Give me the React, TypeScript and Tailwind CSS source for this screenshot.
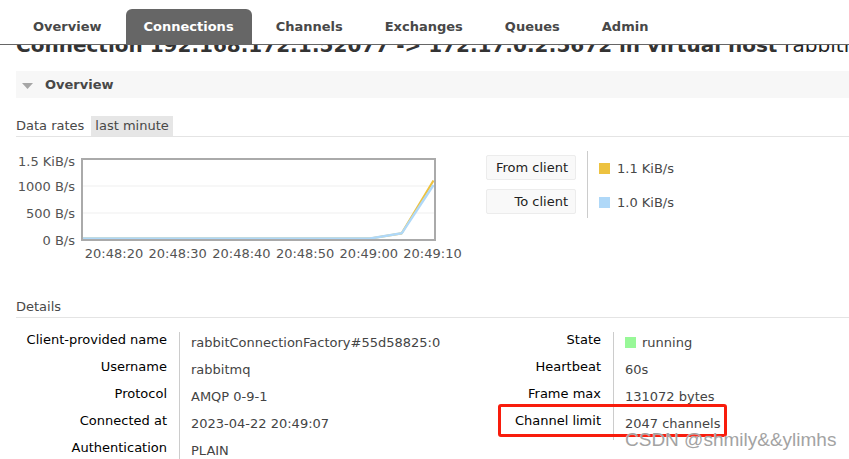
import React from "react";

const tabs = ["Overview", "Connections", "Channels", "Exchanges", "Queues", "Admin"];

const leftRows: [string, string][] = [
  ["Client-provided name", "rabbitConnectionFactory#55d58825:0"],
  ["Username", "rabbitmq"],
  ["Protocol", "AMQP 0-9-1"],
  ["Connected at", "2023-04-22 20:49:07"],
  ["Authentication", "PLAIN"],
];

const rightRows: [string, string][] = [
  ["State", "running"],
  ["Heartbeat", "60s"],
  ["Frame max", "131072 bytes"],
  ["Channel limit", "2047 channels"],
];

function Chart() {
  const xs = [114, 177.7, 241.4, 305.1, 368.8, 432.5];
  const xl = ["20:48:20", "20:48:30", "20:48:40", "20:48:50", "20:49:00", "20:49:10"];
  return (
    <svg width={454} height={130} viewBox="16 140 454 130" className="shrink-0">
      <g fontFamily="'DejaVu Sans', sans-serif" fontSize="13" fill="#545454">
        <text x="75" y="166" textAnchor="end">1.5 KiB/s</text>
        <text x="75" y="191" textAnchor="end">1000 B/s</text>
        <text x="75" y="218" textAnchor="end">500 B/s</text>
        <text x="75" y="245" textAnchor="end">0 B/s</text>
        {xs.map((x, i) => (
          <text key={i} x={x} y="257.5" textAnchor="middle">{xl[i]}</text>
        ))}
      </g>
      <line x1="83" y1="186" x2="434" y2="186" stroke="#efefef" strokeWidth="1" />
      <line x1="83" y1="213" x2="434" y2="213" stroke="#efefef" strokeWidth="1" />
      <polyline
        points="83,238.5 370,238.5 401.7,233.3 433.5,180.5"
        fill="none"
        stroke="#edc240"
        strokeWidth="2.2"
        strokeLinejoin="round"
      />
      <polyline
        points="83,238.5 370,238.5 401.7,233.3 433.5,185"
        fill="none"
        stroke="#afd8f8"
        strokeWidth="2.4"
        strokeLinejoin="round"
      />
      <rect x="82" y="159" width="353" height="81" fill="none" stroke="#aaaaaa" strokeWidth="2" />
    </svg>
  );
}

export default function App() {
  return (
    <div className="relative w-[849px] h-[459px] overflow-hidden bg-white font-['DejaVu_Sans',sans-serif] text-[13px] text-[#484848]">
      {/* Top menu */}
      <div className="h-[45px] border-b border-[#666] flex items-end pl-[15px] gap-[6px]">
        {tabs.map((t) =>
          t === "Connections" ? (
            <div key={t} className="h-[35px] px-[18px] flex items-center rounded-t-[6px] bg-[#666] text-white font-bold">
              {t}
            </div>
          ) : (
            <div key={t} className="h-[35px] px-[18px] flex items-center font-bold text-[#484848]">
              {t}
            </div>
          )
        )}
      </div>

      {/* Clipped title (scrolled under menu) */}
      <div className="h-[8px] overflow-hidden pl-[16px]">
        <div className="mt-[-12px] whitespace-nowrap text-[20px] leading-[24px] font-bold text-[#333]">
          Connection 192.168.172.1:52077 -&gt; 172.17.0.2:5672 in virtual host{" "}
          <span className="font-normal text-[#222]">rabbitmq</span>
        </div>
      </div>

      {/* Section header */}
      <div className="mt-[18px] ml-[16px] h-[27px] bg-[#f7f7f7] flex items-center">
        <svg width="11" height="6" viewBox="0 0 11 6" className="ml-[6px] mt-[2px]">
          <polygon points="0,0 11,0 5.5,6" fill="#a6a6a6" />
        </svg>
        <span className="ml-[12px] font-bold text-[#484848]">Overview</span>
      </div>

      {/* Data rates */}
      <div className="mt-[18px] ml-[16px] h-[21px] border-b border-[#e4e4e4] flex items-stretch">
        <span className="flex items-center">Data rates</span>
        <span className="ml-[7px] px-[4px] h-[20px] flex items-center bg-[#e6e6e6]">last minute</span>
      </div>

      {/* Chart + legend */}
      <div className="mt-[3px] ml-[16px] flex">
        <Chart />
        <div className="ml-[16px] mt-[11px] flex">
          <div className="pt-[4px] flex flex-col gap-[9px]">
            <div className="w-[90px] h-[25px] pr-[7px] flex items-center justify-end bg-[#f9f9f9] border border-[#ececec] rounded-[2px] text-[#222]">
              From client
            </div>
            <div className="w-[90px] h-[25px] pr-[7px] flex items-center justify-end bg-[#f9f9f9] border border-[#ececec] rounded-[2px] text-[#222]">
              To client
            </div>
          </div>
          <div className="ml-[11px] w-px h-[67px] bg-[#cccccc]" />
          <div className="ml-[11px] pt-[5px] flex flex-col gap-[9px]">
            <div className="h-[25px] flex items-center gap-[7px]">
              <span className="w-[11px] h-[11px] bg-[#edc240]" />
              <span>1.1 KiB/s</span>
            </div>
            <div className="h-[25px] flex items-center gap-[7px]">
              <span className="w-[11px] h-[11px] bg-[#afd8f8]" />
              <span>1.0 KiB/s</span>
            </div>
          </div>
        </div>
      </div>

      {/* Details heading */}
      <div className="mt-[27px] ml-[16px] h-[21px] border-b border-[#e4e4e4] flex items-center">Details</div>

      {/* Details tables */}
      <div className="mt-[8px] ml-[16px] flex">
        <div className="w-[464px] flex">
          <div className="w-[163px] pr-[12px] flex flex-col items-end text-black">
            {leftRows.map(([k]) => (
              <div key={k} className="h-[27px] leading-[27px] whitespace-nowrap">{k}</div>
            ))}
          </div>
          <div className="mt-[6px] w-px h-[135px] bg-[#cccccc]" />
          <div className="pl-[11px] pt-[3px] flex flex-col text-[#444]">
            {leftRows.map(([k, v]) => (
              <div key={k} className="h-[27px] leading-[27px] whitespace-nowrap">{v}</div>
            ))}
          </div>
        </div>
        <div className="flex">
          <div className="w-[133px] pr-[12px] flex flex-col items-end text-black">
            {rightRows.map(([k]) => (
              <div key={k} className="h-[27px] leading-[27px] whitespace-nowrap">{k}</div>
            ))}
          </div>
          <div className="mt-[6px] w-px h-[108px] bg-[#cccccc]" />
          <div className="pl-[11px] pt-[3px] flex flex-col text-[#444]">
            {rightRows.map(([k, v]) => (
              <div key={k} className="h-[27px] flex items-center whitespace-nowrap">
                {k === "State" ? (
                  <>
                    <span className="w-[11px] h-[11px] bg-[#98f898] mr-[6px]" />
                    <span>{v}</span>
                  </>
                ) : (
                  v
                )}
              </div>
            ))}
          </div>
        </div>
      </div>

      {/* Annotation box */}
      <div className="absolute left-[498px] top-[404px] w-[229px] h-[33px] border-[3px] border-[#f81c0c] rounded-[3px]" />

      {/* Watermark */}
      <div className="absolute left-[625px] top-[430px] whitespace-nowrap text-[19px] leading-[19px] font-['Liberation_Sans',Arial,sans-serif] text-[#a3a3a3] [text-shadow:0_0_1px_rgba(255,255,255,0.9)]">
        CSDN @shmily&amp;&amp;ylimhs
      </div>
    </div>
  );
}
